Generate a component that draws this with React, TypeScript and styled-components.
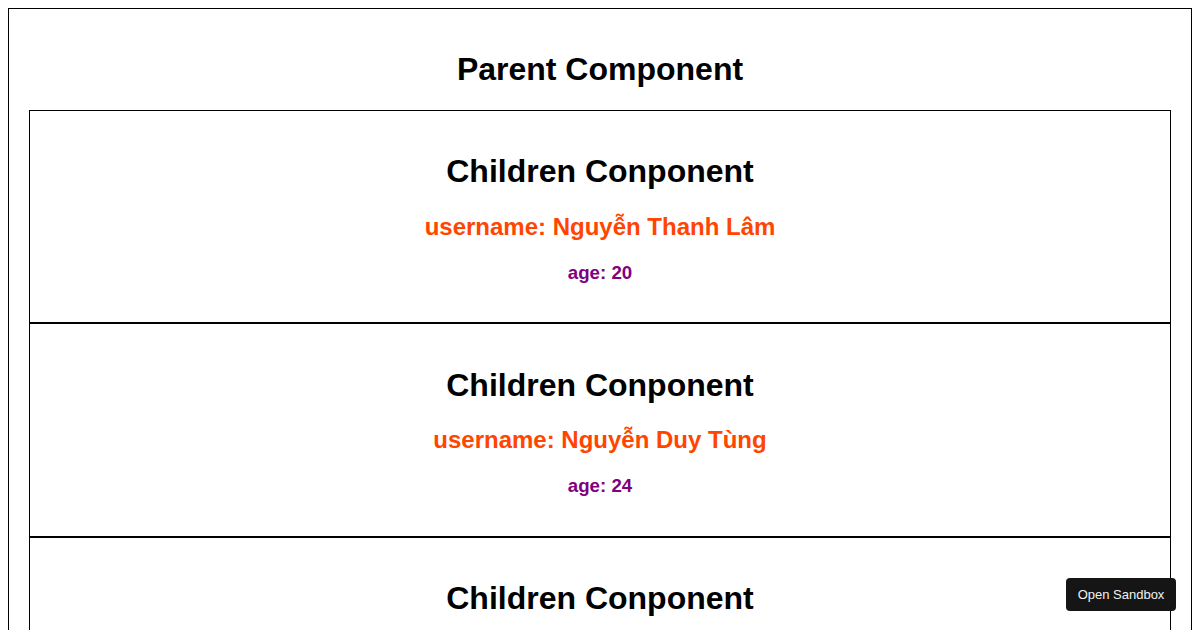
import React from "react";
import styled, { createGlobalStyle } from "styled-components";

const GlobalStyle = createGlobalStyle`
  body {
    margin: 8px;
    font-family: "Liberation Sans", Arial, Helvetica, sans-serif;
    background: #ffffff;
    color: #000000;
  }
`;

const Parent = styled.div`
  border: 1px solid #000;
  padding: 21px 20px 20px;
  text-align: center;
`;

const ParentTitle = styled.h1`
  font-size: 32px;
  font-weight: bold;
  margin: 21.44px 0;
`;

const ChildBox = styled.div`
  border: 1px solid #000;
  padding: 21px 20px 20px;
`;

const ChildTitle = styled.h1`
  font-size: 32px;
  font-weight: bold;
  margin: 21.44px 0 22.44px;
`;

const Username = styled.h2`
  font-size: 24px;
  font-weight: bold;
  color: orangered;
  margin: 19.92px 0 20.92px;
`;

const Age = styled.h3`
  font-size: 18.72px;
  font-weight: bold;
  color: purple;
  margin: 18.72px 0;
`;

const SandboxButton = styled.button`
  position: fixed;
  right: 24px;
  bottom: 19px;
  width: 110px;
  height: 33px;
  border: none;
  border-radius: 4px;
  background: #151515;
  color: #f2f2f2;
  font-family: "Liberation Sans", Arial, sans-serif;
  font-size: 13px;
  padding: 0;
  cursor: pointer;
`;

interface User {
  username: string;
  age: number;
}

const users: User[] = [
  { username: "Nguyễn Thanh Lâm", age: 20 },
  { username: "Nguyễn Duy Tùng", age: 24 },
  { username: "Trần Văn An", age: 22 },
];

const Children: React.FC<User> = ({ username, age }) => (
  <ChildBox>
    <ChildTitle>Children Conponent</ChildTitle>
    <Username>username: {username}</Username>
    <Age>age: {age}</Age>
  </ChildBox>
);

export default function App() {
  return (
    <>
      <GlobalStyle />
      <Parent>
        <ParentTitle>Parent Component</ParentTitle>
        {users.map((u) => (
          <Children key={u.username} {...u} />
        ))}
      </Parent>
      <SandboxButton>Open Sandbox</SandboxButton>
    </>
  );
}
